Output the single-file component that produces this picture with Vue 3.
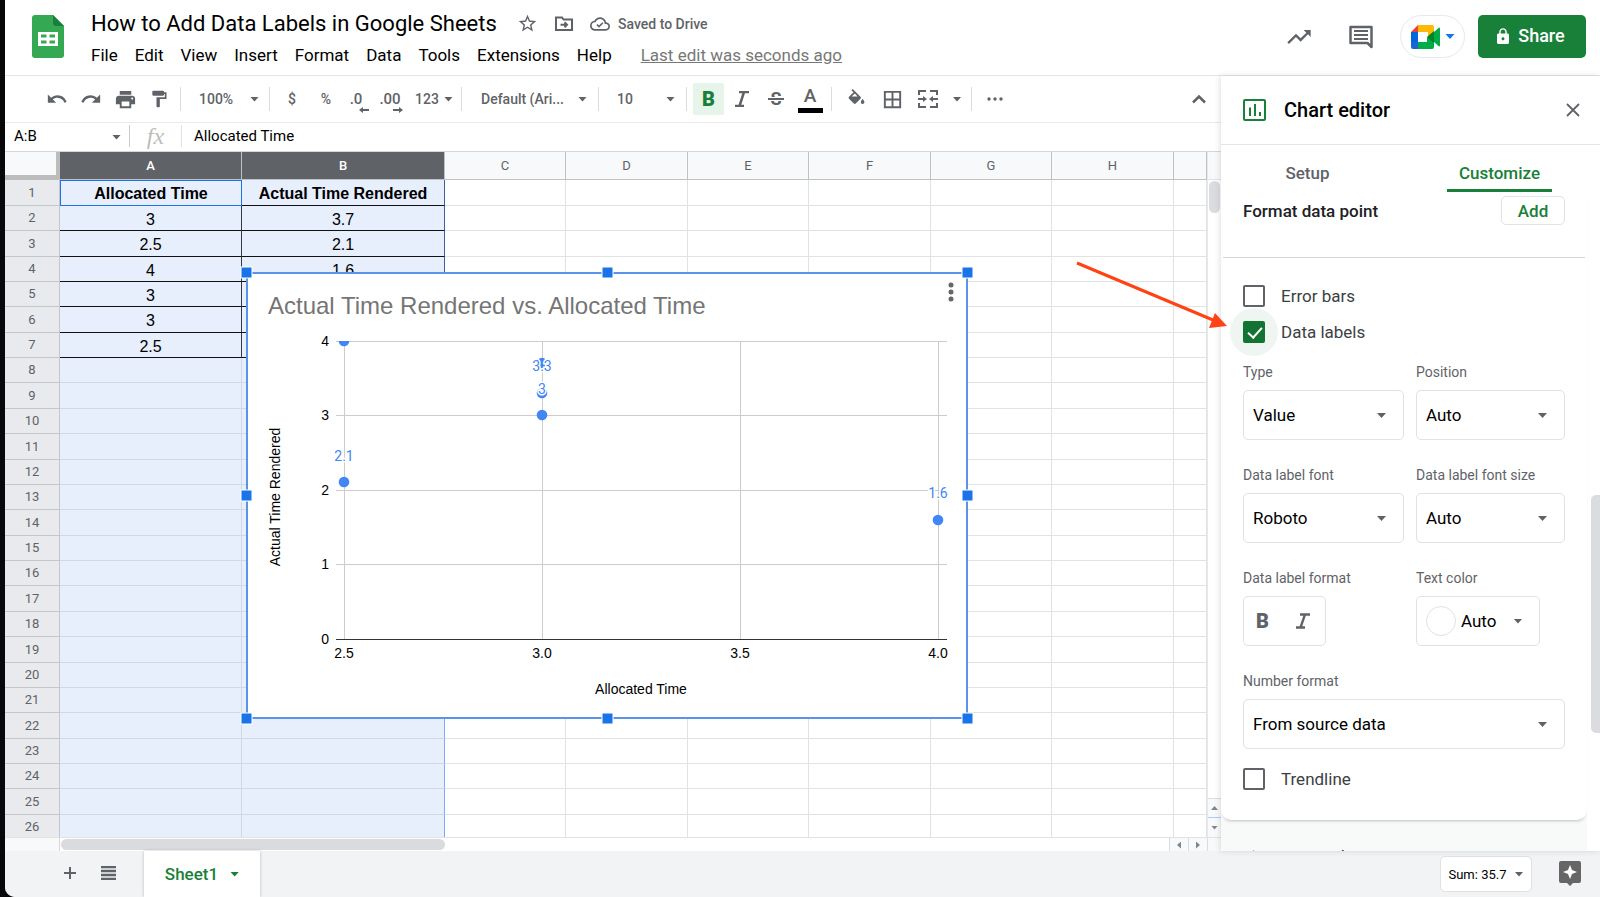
<script setup>
import { ref } from 'vue'

const menus = ['File', 'Edit', 'View', 'Insert', 'Format', 'Data', 'Tools', 'Extensions', 'Help']
const columns = ['A', 'B', 'C', 'D', 'E', 'F', 'G', 'H', '']
const headers = ['Allocated Time', 'Actual Time Rendered']
const values = [
  ['3', '3.7'],
  ['2.5', '2.1'],
  ['4', '1.6'],
  ['3', '3.3'],
  ['3', '3'],
  ['2.5', '4'],
]
const rows = Array.from({ length: 26 }, (_, i) => {
  if (i === 0) return headers
  return values[i - 1] || ['', '']
})

const errorBars = ref(false)
const dataLabels = ref(true)
const trendline = ref(false)
const fileName = ref('How to Add Data Labels in Google Sheets')
const cellRange = ref('A:B')
const formula = ref('Allocated Time')

const chart = { width: 722, height: 447 }
const xAt = (v) => Math.round(98 + (v - 2.5) * 396)
const yAt = (v) => Math.round(367 - v * 74.6)
const xTicks = [2.5, 3, 3.5, 4]
const yTicks = [0, 1, 2, 3, 4]
const points = [
  { x: 2.5, y: 4 },
  { x: 3, y: 3.7 },
  { x: 3, y: 3.3 },
  { x: 3, y: 3 },
  { x: 2.5, y: 2.1 },
  { x: 4, y: 1.6 },
]
const pointLabels = [
  { text: '3.3', x: 3, y: 99 },
  { text: '3', x: 3, y: 122 },
  { text: '2.1', x: 2.5, y: 189 },
  { text: '1.6', x: 4, y: 226 },
]
const handles = [
  [0, 0], [361, 0], [721, 0],
  [0, 223], [721, 223],
  [0, 446], [361, 446], [721, 446],
]
</script>

<template>
  <div class="app">
    <div class="window">
      <header class="top">
        <svg class="logo" viewBox="0 0 32 43" aria-hidden="true">
          <path d="M3 0h18l11 11v29a3 3 0 0 1-3 3H3a3 3 0 0 1-3-3V3a3 3 0 0 1 3-3z" fill="#34a853" />
          <path d="M21 0l11 11H24a3 3 0 0 1-3-3z" fill="#188038" />
          <path fill-rule="evenodd" d="M6 17h20v14H6zM9 19.500v3h5.500v-3zM17.500 19.500v3H23v-3zM9 25.500v3h5.500v-3zM17.500 25.500v3H23v-3z" fill="#fff" />
        </svg>
        <div class="heading">
          <div class="title-row">
            <input v-model="fileName" class="file-name" aria-label="File name" />
            <button class="bare" aria-label="Star">
              <svg width="21" height="21" viewBox="0 0 24 24"><path d="M22 9.240l-7.190-.620L12 2 9.190 8.630 2 9.240l5.460 4.730L5.820 21 12 17.270 18.180 21l-1.630-7.030L22 9.240zM12 15.400l-3.760 2.270 1-4.280-3.320-2.880 4.380-.380L12 6.100l1.710 4.040 4.380.380-3.320 2.880 1 4.280L12 15.400z" /></svg>
            </button>
            <button class="bare" aria-label="Move">
              <svg width="20" height="20" viewBox="0 0 20 20" class="line">
                <path d="M2 4.500v11.500h16V5.500H9.500L8 3.500H2z" />
                <path d="M6.500 10.700h6M10.500 8.200l2.500 2.500-2.500 2.500" />
              </svg>
            </button>
            <span class="saved">
              <svg width="20" height="20" viewBox="0 0 24 24"><path d="M19.350 10.040C18.670 6.590 15.640 4 12 4 9.110 4 6.600 5.640 5.350 8.040 2.340 8.360 0 10.910 0 14c0 3.310 2.690 6 6 6h13c2.760 0 5-2.240 5-5 0-2.640-2.050-4.780-4.650-4.960zM19 18H6c-2.210 0-4-1.790-4-4 0-2.050 1.530-3.760 3.560-3.970l1.070-.110.500-.950C8.080 7.140 9.940 6 12 6c2.620 0 4.880 1.860 5.390 4.430l.300 1.500 1.530.110c1.560.100 2.780 1.410 2.780 2.960 0 1.650-1.350 3-3 3z" /><path d="M8.300 12.600l2.500 2.500 4.600-4.600" fill="none" stroke="#5f6368" stroke-width="1.800" /></svg>
              Saved to Drive
            </span>
          </div>
          <nav class="menu">
            <button v-for="m in menus" :key="m" class="bare">{{ m }}</button>
            <a href="#">Last edit was seconds ago</a>
          </nav>
        </div>
        <div class="actions">
          <button class="bare trend" aria-label="Activity">
            <svg width="28" height="28" viewBox="0 0 24 24"><path d="M16 6l2.290 2.290-4.880 4.880-4-4L2 16.590 3.410 18l6-6 4 4 6.300-6.290L22 12V6z" /></svg>
          </button>
          <button class="bare comment" aria-label="Comments">
            <svg width="26" height="26" viewBox="0 0 26 26"><path d="M2.500 3h21v20l-4-4h-17z" fill="none" stroke="#5f6368" stroke-width="2.500" stroke-linejoin="round" /><path d="M6 7h14M6 11h14M6 15h14" stroke="#5f6368" stroke-width="2" /></svg>
          </button>
          <button class="meet" aria-label="Meet">
            <svg width="30" height="24" viewBox="0 0 30 24">
              <path d="M7 0v7H0z" fill="#ea4335" />
              <path d="M7 0h14a2 2 0 0 1 2 2v7l-6 4V7H7z" fill="#ffba00" />
              <path d="M0 7h7v10H0z" fill="#0066da" />
              <path d="M0 17h7v7H2a2 2 0 0 1-2-2z" fill="#1967d2" />
              <path d="M7 17h9v-5l7 3v7a2 2 0 0 1-2 2H7z" fill="#00ac47" />
              <path d="M23 7l5-4.500a1 1 0 0 1 1 1v17a1 1 0 0 1-1 1L23 17z" fill="#00ac47" />
              <path d="M16 12l7-6v12z" fill="#00832d" />
            </svg>
            <i class="caret blue"></i>
          </button>
          <button class="share">
            <svg width="16" height="18" viewBox="4 1 16 21"><path d="M18 8h-1V6c0-2.760-2.240-5-5-5S7 3.240 7 6v2H6c-1.100 0-2 .900-2 2v10c0 1.100.900 2 2 2h12c1.100 0 2-.900 2-2V10c0-1.100-.900-2-2-2zm-6 9c-1.100 0-2-.900-2-2s.900-2 2-2 2 .900 2 2-.900 2-2 2zm3.100-9H8.900V6c0-1.710 1.390-3.100 3.100-3.100 1.710 0 3.100 1.390 3.100 3.100v2z" fill="#fff" /></svg>
            Share
          </button>
        </div>
      </header>

      <div class="workspace">
        <main class="main">
          <div class="toolbar">
            <button class="tool" aria-label="Undo"><svg width="22" height="22" viewBox="0 0 24 24"><path d="M12.500 8c-2.650 0-5.050.990-6.900 2.600L2 7v9h9l-3.620-3.620c1.390-1.160 3.160-1.880 5.120-1.880 3.540 0 6.550 2.310 7.600 5.500l2.370-.780C21.080 11.030 17.150 8 12.500 8z" /></svg></button>
            <button class="tool" aria-label="Redo"><svg width="22" height="22" viewBox="0 0 24 24"><path d="M18.400 10.600C16.550 8.990 14.150 8 11.500 8c-4.650 0-8.580 3.030-9.960 7.220L3.900 16c1.050-3.190 4.050-5.500 7.600-5.500 1.950 0 3.730.720 5.120 1.880L13 16h9V7l-3.600 3.600z" /></svg></button>
            <button class="tool" aria-label="Print"><svg width="23" height="23" viewBox="0 0 24 24"><path d="M19 8H5c-1.660 0-3 1.340-3 3v6h4v4h12v-4h4v-6c0-1.660-1.340-3-3-3zm-3 11H8v-5h8v5zm3-7c-.550 0-1-.450-1-1s.450-1 1-1 1 .450 1 1-.450 1-1 1zm-1-9H6v4h12V3z" /></svg></button>
            <button class="tool" aria-label="Paint format"><svg width="20" height="20" viewBox="0 0 24 24"><path d="M18 4V3c0-.550-.450-1-1-1H5c-.550 0-1 .450-1 1v4c0 .550.450 1 1 1h12c.550 0 1-.450 1-1V6h1v4H9v11c0 .550.450 1 1 1h2c.550 0 1-.450 1-1v-9h8V4h-3z" /></svg></button>
            <i class="sep"></i>
            <label class="pick zoom"><select aria-label="Zoom"><option>100%</option></select><i class="caret"></i></label>
            <i class="sep tight"></i>
            <button class="tool">$</button>
            <button class="tool">%</button>
            <button class="tool decimal">.0<svg width="10" height="6" viewBox="0 0 10 6"><path d="M4 0L0 3l4 3V4h6V2H4z" /></svg></button>
            <button class="tool decimal">.00<svg width="10" height="6" viewBox="0 0 10 6"><path d="M6 0l4 3-4 3V4H0V2h6z" /></svg></button>
            <button class="tool number">123<i class="caret"></i></button>
            <i class="sep tight"></i>
            <label class="pick font"><select aria-label="Font"><option>Default (Ari...</option></select><i class="caret"></i></label>
            <i class="sep tight"></i>
            <label class="pick size"><select aria-label="Font size"><option>10</option></select><i class="caret"></i></label>
            <i class="sep end"></i>
            <button class="tool bold">B</button>
            <button class="tool" aria-label="Italic"><svg width="16" height="16" viewBox="0 0 16 16"><path d="M5 1h10M1 15h9M10 1L5.500 15" fill="none" stroke="#5f6368" stroke-width="2.500" /></svg></button>
            <button class="tool" aria-label="Strikethrough"><svg width="18" height="20" viewBox="0 0 18 20"><text x="9" y="16" text-anchor="middle" class="strike">S</text><path d="M0 8h18v4H0z" fill="#fff" /><path d="M1 9h16v2H1z" /></svg></button>
            <button class="tool color">A</button>
            <i class="sep"></i>
            <button class="tool wide" aria-label="Fill color"><svg width="21" height="21" viewBox="0 0 24 24"><path d="M16.560 8.940L7.620 0 6.210 1.410l2.380 2.380-5.150 5.150c-.590.590-.590 1.540 0 2.120l5.500 5.500c.290.290.680.440 1.060.440s.770-.150 1.060-.440l5.500-5.500c.590-.580.590-1.530 0-2.120zM6.500 8.500L10 5.210 13.300 8.500zM19 11.500s-2 2.170-2 3.500c0 1.100.900 2 2 2s2-.900 2-2c0-1.330-2-3.500-2-3.500z" /></svg></button>
            <button class="tool wide" aria-label="Borders"><svg width="23" height="23" viewBox="0 0 24 24"><path d="M3 3v18h18V3H3zm8 16H5v-6h6v6zm0-8H5V5h6v6zm8 8h-6v-6h6v6zm0-8h-6V5h6v6z" /></svg></button>
            <button class="tool wide" aria-label="Merge cells"><svg width="20" height="18" viewBox="0 0 20 18"><path d="M1 5V1h7M12 1h7v4M1 13v4h7M12 17h7v-4M0 9h6M20 9h-6" fill="none" stroke="#5f6368" stroke-width="2" /><path d="M5 6l4 3-4 3zM15 6l-4 3 4 3z" /></svg></button>
            <button class="bare drop" aria-label="Merge options"><i class="caret"></i></button>
            <i class="sep end"></i>
            <button class="tool" aria-label="More"><svg width="16" height="4" viewBox="0 0 16 4"><circle cx="2" cy="2" r="1.700" /><circle cx="8" cy="2" r="1.700" /><circle cx="14" cy="2" r="1.700" /></svg></button>
            <button class="tool fold" aria-label="Hide menus"><svg width="14" height="10" viewBox="0 0 14 10"><path d="M1 8.500l6-6 6 6" fill="none" stroke="#5f6368" stroke-width="2.500" /></svg></button>
          </div>

          <div class="formula-bar">
            <input v-model="cellRange" class="range" aria-label="Name box" />
            <i class="caret"></i>
            <i class="mark"></i>
            <span class="fx">fx</span>
            <i class="mark light"></i>
            <input v-model="formula" class="formula" aria-label="Formula" />
          </div>

          <div class="sheet">
            <div class="grid">
              <table>
                <colgroup>
                  <col class="c-row" /><col class="c-a" /><col class="c-b" />
                  <col class="c-even" /><col class="c-odd" /><col class="c-even" /><col class="c-odd" /><col class="c-even" /><col class="c-odd" />
                  <col />
                </colgroup>
                <thead>
                  <tr>
                    <td class="corner"></td>
                    <th v-for="(c, i) in columns" :key="i" :class="{ picked: i < 2 }" scope="col">{{ c }}</th>
                  </tr>
                </thead>
                <tbody>
                  <tr v-for="(r, i) in rows" :key="i" :class="{ filled: i < 7, head: i === 0 }">
                    <th scope="row">{{ i + 1 }}</th>
                    <td class="sel">{{ r[0] }}</td>
                    <td class="sel last">{{ r[1] }}</td>
                    <td v-for="n in 7" :key="n"></td>
                  </tr>
                </tbody>
              </table>
              <svg class="chart" :width="chart.width" :height="chart.height" :viewBox="`0 0 ${chart.width} ${chart.height}`" role="img" aria-label="Actual Time Rendered vs. Allocated Time">
                <defs><clipPath id="plot"><rect x="80" :y="yAt(4)" width="640" height="300" /></clipPath></defs>
                <rect class="frame" x="1" y="1" width="720" height="445" />
                <text class="chart-title" x="22" y="42">Actual Time Rendered vs. Allocated Time</text>
                <g class="kebab"><circle cx="705" cy="13" r="2.500" /><circle cx="705" cy="20" r="2.500" /><circle cx="705" cy="27" r="2.500" /></g>
                <g class="lines">
                  <rect v-for="t in xTicks" :key="'x' + t" :x="xAt(t)" :y="yAt(4)" width="1" height="298" />
                  <rect v-for="t in yTicks" :key="'y' + t" x="90" :y="yAt(t)" width="611" height="1" :class="{ axis: t === 0 }" />
                </g>
                <text v-for="t in yTicks" :key="'ty' + t" class="tick" x="83" :y="yAt(t) + 5" text-anchor="end">{{ t }}</text>
                <text v-for="t in xTicks" :key="'tx' + t" class="tick" :x="xAt(t)" y="386" text-anchor="middle">{{ t.toFixed(1) }}</text>
                <text class="tick" x="395" y="422" text-anchor="middle">Allocated Time</text>
                <text class="tick" transform="translate(34 225) rotate(-90)" text-anchor="middle">Actual Time Rendered</text>
                <g clip-path="url(#plot)"><circle v-for="(p, i) in points" :key="i" class="dot" :cx="xAt(p.x)" :cy="yAt(p.y)" r="5.300" /></g>
                <text v-for="l in pointLabels" :key="l.text" class="value" :x="xAt(l.x)" :y="l.y" text-anchor="middle">{{ l.text }}</text>
                <rect v-for="(h, i) in handles" :key="'h' + i" class="handle" :x="h[0] - 5" :y="h[1] - 5" width="11" height="11" />
              </svg>
            </div>
            <div class="vscroll">
              <div class="vtop"></div>
              <div class="vthumb"></div>
              <button class="step up" aria-label="Scroll up"><i></i></button>
              <button class="step down" aria-label="Scroll down"><i></i></button>
            </div>
          </div>
          <div class="hscroll">
            <div class="hcorner"></div>
            <div class="hthumb"></div>
            <button class="step left" aria-label="Scroll left"><i></i></button>
            <button class="step right" aria-label="Scroll right"><i></i></button>
            <div class="hend"></div>
          </div>
        </main>

        <aside class="panel">
          <div class="panel-head">
            <svg width="24" height="22" viewBox="0 0 24 22"><rect x="1" y="1" width="21" height="20" rx="1" fill="none" stroke="#188038" stroke-width="2" /><path d="M7 8.500V17M12 5v12M17 13v4" stroke="#188038" stroke-width="2" /></svg>
            <h2>Chart editor</h2>
            <button class="bare" aria-label="Close"><svg width="14" height="14" viewBox="0 0 14 14"><path d="M1 1l12 12M13 1L1 13" stroke="#5f6368" stroke-width="1.800" /></svg></button>
          </div>
          <div class="tabs">
            <button class="bare">Setup</button>
            <button class="bare current">Customize</button>
          </div>
          <div class="panel-body">
            <div class="sections">
              <section class="card">
                <div class="point-row"><span>Format data point</span><button class="add">Add</button></div>
                <hr />
                <label class="check"><input v-model="errorBars" type="checkbox" />Error bars</label>
                <label class="check focus"><input v-model="dataLabels" type="checkbox" />Data labels</label>
                <div class="fields">
                  <label class="field"><span>Type</span><span class="select"><select><option>Value</option></select><i class="caret"></i></span></label>
                  <label class="field"><span>Position</span><span class="select"><select><option>Auto</option></select><i class="caret"></i></span></label>
                  <label class="field"><span>Data label font</span><span class="select"><select><option>Roboto</option></select><i class="caret"></i></span></label>
                  <label class="field"><span>Data label font size</span><span class="select"><select><option>Auto</option></select><i class="caret"></i></span></label>
                  <div class="field">
                    <span>Data label format</span>
                    <div class="format">
                      <button class="bare b">B</button>
                      <button class="bare" aria-label="Italic"><svg width="16" height="16" viewBox="0 0 16 16"><path d="M5 1.500h10M1 14.500h9M10 1.500L5.500 14.500" fill="none" stroke="#5f6368" stroke-width="2.300" /></svg></button>
                    </div>
                  </div>
                  <div class="field">
                    <span id="text-color">Text color</span>
                    <button class="swatch" aria-describedby="text-color"><i class="circle"></i>Auto<i class="caret"></i></button>
                  </div>
                  <label class="field full"><span>Number format</span><span class="select"><select><option>From source data</option></select><i class="caret"></i></span></label>
                </div>
                <label class="check last"><input v-model="trendline" type="checkbox" />Trendline</label>
              </section>
              <button class="collapsed">
                <svg width="10" height="16" viewBox="0 0 10 16"><path d="M1 1l6 6-6 6" fill="none" stroke="#5f6368" stroke-width="2" /></svg>
                Legend
              </button>
            </div>
            <div class="track"><div class="thumb"></div></div>
          </div>
          <svg class="pointer" width="156" height="72" viewBox="0 0 156 72" aria-hidden="true">
            <path d="M2 3L138 60" stroke="#ff4314" stroke-width="3" />
            <path d="M152 66L134 68L140 53z" fill="#ff4314" />
          </svg>
        </aside>
      </div>

      <footer class="bottom">
        <button class="bare" aria-label="Add sheet"><svg width="12" height="12" viewBox="0 0 12 12"><path d="M6 0v12M0 6h12" stroke="#5f6368" stroke-width="2" /></svg></button>
        <button class="bare" aria-label="All sheets"><svg width="15" height="14" viewBox="0 0 15 14"><path d="M0 1h15M0 5h15M0 9h15M0 13h15" stroke="#5f6368" stroke-width="2.500" /></svg></button>
        <button class="sheet-tab">Sheet1<i class="caret green"></i></button>
        <button class="sum">Sum: 35.7<i class="caret"></i></button>
        <button class="bare explore" aria-label="Explore"><svg width="22" height="25" viewBox="0 0 22 25"><path d="M2 0h18a2 2 0 0 1 2 2v18a2 2 0 0 1-2 2h-6l-3 3-3-3H2a2 2 0 0 1-2-2V2a2 2 0 0 1 2-2z" fill="#666" /><path d="M11 4l2 5 5 2-5 2-2 5-2-5-5-2 5-2z" fill="#fff" /></svg></button>
      </footer>
    </div>
  </div>
</template>

<style>
body { margin: 0; background: #000; overflow: hidden; }
</style>

<style scoped>
* { box-sizing: border-box; }
.app { height: 100vh; padding-left: 5px; background: #08080a; font-family: Roboto, "Liberation Sans", sans-serif; color: #000; }
.window { height: 100%; display: flex; flex-direction: column; background: #fff; border-bottom-left-radius: 10px; overflow: hidden; }
button, input, select { font: inherit; color: inherit; background: none; border: 0; padding: 0; margin: 0; outline: 0; appearance: none; }
button { display: flex; align-items: center; justify-content: center; flex: none; white-space: nowrap; }
svg { display: block; flex: none; fill: #5f6368; }
.line path { fill: none; stroke: #5f6368; stroke-width: 2; }
.caret { flex: none; width: 9px; height: 5px; background: #5f6368; clip-path: polygon(0 0, 100% 0, 50% 100%); }
.caret.blue { background: #1a73e8; }
.caret.green { background: #188038; }

.top { display: flex; flex: none; height: 76px; border-bottom: 1px solid #e3e5e8; }
.logo { width: 32px; height: 43px; margin: 15px 27px 0 27px; }
.heading { display: flex; flex-direction: column; flex: 1; min-width: 0; padding-top: 8px; }
.title-row { display: flex; align-items: center; height: 31px; gap: 16px; }
.file-name { width: 410px; height: 31px; font-size: 22px; }
.saved { display: flex; align-items: center; gap: 8px; font-size: 14px; font-weight: 500; color: #5f6368; white-space: nowrap; }
.menu { display: flex; align-items: center; gap: 17px; height: 32px; font-size: 17px; white-space: nowrap; }
.menu a { margin-left: 12px; color: #777; }
.actions { display: flex; height: 43px; margin: 15px 14px 0 0; align-items: center; }
.trend { margin-right: 35px; }
.comment { margin-right: 26px; }
.meet { width: 65px; height: 43px; gap: 5px; margin-right: 13px; border: 1px solid #e6e8ea; border-radius: 22px; }
.share { width: 108px; height: 43px; gap: 9px; padding: 0 2px 2px 0; background: #188038; color: #fff; border-radius: 5px; font-size: 18px; font-weight: 500; }
.share svg { width: 12px; height: 16px; }

.workspace { display: flex; flex: 1; min-height: 0; }
.main { display: flex; flex-direction: column; flex: 1; min-width: 0; }
.toolbar { display: flex; align-items: center; flex: none; height: 47px; padding-left: 35px; border-bottom: 1px solid #e8eaed; font-size: 14px; font-weight: 500; color: #5f6368; }
.tool { width: 34px; height: 32px; }
.tool.wide { width: 36px; }
.sep { flex: none; width: 1px; height: 24px; margin: 0 6px 0 4px; background: #dadce0; }
.sep.tight { margin: 0 5px 0 0; }
.sep.end { margin: 0 6px 0 0; }
.pick { display: flex; align-items: center; justify-content: space-between; height: 32px; }
.pick select { width: 90px; }
.zoom { width: 82px; padding: 0 10px 0 12px; }
.zoom select { width: 40px; }
.font { width: 131px; padding: 0 11px 0 14px; }
.size { width: 82px; padding: 0 11px 0 13px; }
.size select { width: 30px; }
.decimal { position: relative; padding-right: 8px; font-size: 15px; }
.decimal svg { position: absolute; right: 8px; bottom: 2px; }
.number { width: 46px; margin-right: 4px; gap: 5px; }
.bold { width: 31px; margin-right: 1px; border-radius: 2px; font-size: 20px; font-weight: 900; color: #188038; background: #e6f4ea; }
.strike { font-size: 18px; font-weight: 700; }
.color { position: relative; align-items: flex-start; font-size: 19px; line-height: 26px; }
.color::after { content: ""; position: absolute; left: 5px; right: 4px; bottom: 2px; height: 5px; background: #000; }
.drop { width: 22px; margin-right: 3px; }
.fold { margin-left: auto; margin-right: 5px; }

.formula-bar { display: flex; align-items: center; flex: none; height: 29px; padding-bottom: 2px; border-bottom: 1px solid #d5d7d9; font-size: 15px; }
.range { width: 97px; padding-left: 9px; }
.formula-bar > .caret { margin: 2px 8px 0 10px; }
.mark { width: 1px; height: 22px; background: #c8cacc; }
.mark.light { background: #e0e2e4; }
.fx { width: 51px; text-align: center; font: italic 24px/26px "Liberation Serif", serif; color: #bdbdbd; }
.formula { flex: 1; min-width: 0; padding-left: 12px; }

.sheet { display: flex; flex: 1; min-height: 0; }
.grid { position: relative; flex: 1; min-width: 0; overflow: hidden; }
table { table-layout: fixed; width: 100%; border-collapse: separate; border-spacing: 0; font: 16px/20px "Liberation Sans", Arial, sans-serif; }
.c-row { width: 55px; }
.c-a { width: 182px; }
.c-b { width: 203px; }
.c-even { width: 121px; }
.c-odd { width: 122px; }
th, td { height: 25px; padding: 3px 0 0; text-align: center; border-right: 1px solid #e1e3e3; border-bottom: 1px solid #e1e3e3; overflow: hidden; }
th { padding: 0; font: 13px/18px Roboto, sans-serif; color: #5f6368; border-color: #c4c7c7; }
tbody tr:nth-child(8n+1) > *, tbody tr:nth-child(8n+3) > *, tbody tr:nth-child(8n+6) > * { height: 26px; }
thead th, thead td { height: 28px; background: #f8f9fa; border-color: #bfc2c2; }
thead th.picked { background: #5f6368; color: #fff; font-weight: 500; }
.corner { border-right: 4px solid #bcbcbc; border-bottom: 5px solid #bcbcbc; }
tbody th { background: #e8eaed; }
.sel { background: #e7eefc; border-color: #d0d8e6; }
.sel.last { border-right: 1px solid #7baaf7; }
.filled .sel { border-bottom-color: #111; border-right-color: #333b4a; }
.filled .sel.last { border-right-color: #3c5fa0; }
.head .sel { font-weight: 700; }
.head .sel:not(.last) { padding-top: 2px; border: 1px solid #1a73e8; }

.chart { position: absolute; left: 241px; top: 120px; overflow: visible; font-family: "Liberation Sans", Arial, sans-serif; }
.frame { fill: #fff; stroke: #5b93ec; stroke-width: 2; }
.chart-title { font-size: 24px; fill: #757575; }
.kebab { fill: #666; }
.lines { fill: #ccc; }
.lines .axis { fill: #333; }
.tick { font-size: 14px; fill: #000; }
.dot { fill: #4285f4; }
.value { font: 14px Roboto, sans-serif; fill: #4285f4; stroke: #fff; stroke-width: 3px; paint-order: stroke; }
.handle { fill: #1a73e8; stroke: #fff; stroke-width: 1px; }

.vscroll { display: flex; flex-direction: column; flex: none; width: 14px; border-left: 1px solid #e6e8e9; background: #fff; }
.vtop { height: 28px; background: #f8f9fa; border-bottom: 1px solid #e1e3e3; }
.vthumb { width: 11px; height: 32px; margin: 1px 1px auto; border-radius: 6px; background: #dadce0; }
.step { height: 19px; background: #f8f9fa; border-top: 1px solid #dadce0; }
.step i { width: 7px; height: 4px; background: #80868b; }
.up i { clip-path: polygon(50% 0, 100% 100%, 0 100%); }
.down { height: 20px; border-color: #aecbfa; }
.down i { clip-path: polygon(0 0, 100% 0, 50% 100%); }
.hscroll { display: flex; flex: none; height: 14px; border-top: 1px solid #e1e3e3; }
.hcorner { width: 55px; background: #f8f9fa; border-right: 1px solid #d5d7d9; }
.hthumb { width: 384px; height: 11px; margin: 1px auto 0 1px; border-radius: 6px; background: #d9dbdf; }
.hscroll .step { width: 19px; height: 14px; border: 0; border-left: 1px solid #dadce0; }
.hscroll .step i { width: 4px; height: 7px; }
.left i { clip-path: polygon(0 50%, 100% 0, 100% 100%); }
.right i { clip-path: polygon(0 0, 100% 50%, 0 100%); }
.hend { width: 14px; background: #f8f9fa; border-left: 1px solid #dadce0; }

.panel { position: relative; display: flex; flex-direction: column; flex: none; width: 379px; background: #fff; box-shadow: -1px 0 6px rgba(60, 64, 67, .16); }
.panel-head { display: flex; align-items: center; flex: none; height: 69px; padding: 0 20px 0 22px; border-bottom: 1px solid #e3e5e8; }
.panel-head h2 { flex: 1; margin: 0 0 0 17px; font-size: 20px; line-height: 24px; font-weight: 500; }
.tabs { display: flex; flex: none; height: 47px; padding: 0 48px 0 34px; justify-content: space-between; font-size: 17px; color: #5f6368; }
.tabs .bare { width: 105px; padding-top: 12px; border-bottom: 3px solid transparent; border-radius: 3px 3px 0 0; font-weight: 500; }
.tabs .current { color: #188038; border-color: #188038; }
.panel-body { display: flex; flex: 1; min-height: 0; overflow: hidden; }
.sections { flex: 1; min-width: 0; background: #f8f9f9; }
.card { position: relative; padding: 4px 22px 23px; background: #fff; border-radius: 0 0 10px 10px; box-shadow: 0 3px 3px -2px rgba(60, 64, 67, .3); font-size: 17px; color: #202124; }
.point-row { display: flex; align-items: center; justify-content: space-between; font-weight: 500; }
.add { width: 64px; height: 29px; border: 1px solid #e0e2e5; border-radius: 5px; font-size: 17px; color: #188038; }
hr { height: 1px; margin: 32px -20px 20px; border: 0; background: #d5d7d9; }
.check { display: flex; align-items: center; height: 36px; gap: 16px; color: #3c4043; }
.check input { position: relative; flex: none; width: 22px; height: 22px; border: 2px solid #5f6368; border-radius: 2px; }
.check input:checked { background: #137333; border-color: #137333; }
.check input:checked::after { content: ""; position: absolute; left: 6px; top: 1px; width: 6px; height: 12px; border: solid #fff; border-width: 0 2px 2px 0; transform: rotate(42deg); }
.focus { position: relative; }
.focus::before { content: ""; position: absolute; left: -13px; top: -6px; width: 48px; height: 48px; border-radius: 50%; background: #eff6f2; }
.fields { display: grid; grid-template-columns: 161fr 149fr; gap: 25px 12px; margin-top: 12px; color: #000; }
.field { display: flex; flex-direction: column; gap: 8px; min-width: 0; }
.field > span:first-child { font-size: 14px; line-height: 20px; color: #5f6368; }
.full { grid-column: 1 / -1; }
.select { position: relative; display: block; }
.select select { display: block; width: 100%; height: 50px; padding: 0 9px; border: 1px solid #e0e2e5; border-radius: 5px; }
.select .caret { position: absolute; right: 18px; top: 23px; }
.format { display: flex; align-items: center; justify-content: space-between; width: 83px; height: 50px; padding: 0 14px 0 12px; border: 1px solid #e0e2e5; border-radius: 5px; }
.format .b { font-size: 20px; font-weight: 900; color: #5f6368; }
.swatch { justify-content: flex-start; width: 124px; height: 50px; gap: 5px; padding-left: 9px; border: 1px solid #e0e2e5; border-radius: 5px; }
.swatch .circle { width: 30px; height: 30px; border: 1px solid #e0e2e5; border-radius: 50%; }
.swatch .caret { margin-left: 12px; }
.check.last { margin-top: 12px; }
.collapsed { justify-content: flex-start; gap: 24px; padding: 26px 0 0 31px; font-size: 18px; line-height: 24px; color: #3c4043; }
.track { flex: none; width: 13px; background: #fff; }
.thumb { width: 9px; height: 238px; margin: 303px 0 0 4px; border-radius: 5px 0 0 5px; background: #dadce0; }
.pointer { position: absolute; left: -146px; top: 184px; }

.bottom { display: flex; align-items: center; flex: none; height: 46px; padding: 0 19px 0 59px; background: #f1f3f4; }
.bottom > .bare { height: 46px; margin-right: 25px; padding-bottom: 2px; }
.sheet-tab { width: 116px; height: 46px; gap: 12px; margin-left: 3px; background: #fff; box-shadow: 0 0 3px rgba(60, 64, 67, .3); font-size: 17px; font-weight: 500; color: #188038; }
.sum { width: 92px; height: 36px; margin-left: auto; margin-right: 27px; gap: 8px; border: 1px solid #dfe1e4; border-radius: 5px; background: #fff; font-size: 13px; }
.bottom > .explore { margin-right: 0; }
</style>
